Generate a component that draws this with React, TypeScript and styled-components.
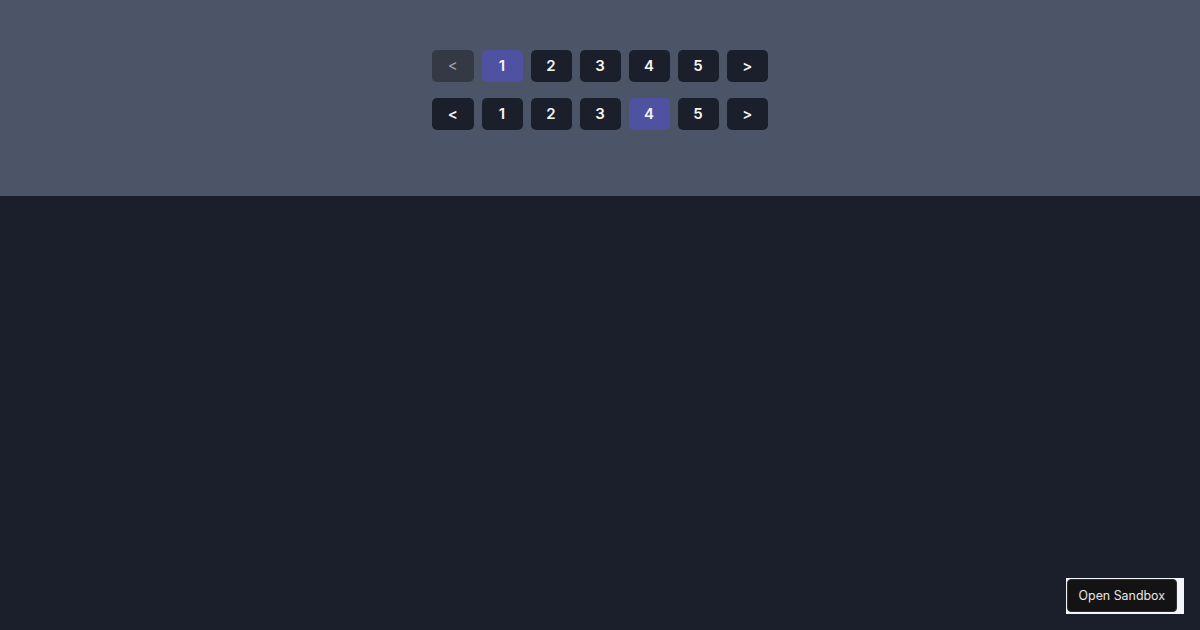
import styled, { createGlobalStyle, css } from "styled-components";

const GlobalStyle = createGlobalStyle`
  html, body {
    margin: 0;
    padding: 0;
    background: #1b1f2b;
    font-family: Inter, "Liberation Sans", sans-serif;
  }
`;

const Page = styled.div`
  min-height: 630px;
  display: flex;
  flex-direction: column;
  background: #1b1f2b;
`;

const Header = styled.section`
  background: #4b5567;
  height: 196px;
  box-sizing: border-box;
  padding-top: 50px;
  display: flex;
  flex-direction: column;
  align-items: center;
  gap: 16px;
`;

const Pager = styled.nav`
  display: flex;
  gap: 8px;
`;

const PageButton = styled.button<{ $active?: boolean; $arrow?: boolean }>`
  height: 32px;
  width: ${(p) => (p.$arrow ? "41.5px" : "41px")};
  padding: 0 0 2px;
  border: 0;
  border-radius: 5px;
  background: #1b1f2b;
  color: #f3f4f6;
  font-family: Inter, "Liberation Sans", sans-serif;
  font-size: 15px;
  font-weight: 600;
  text-align: center;
  cursor: pointer;

  ${(p) =>
    p.$active &&
    css`
      background: #4f52a0;
    `}

  &:disabled {
    background: #343945;
    color: #9ca3af;
    font-weight: 400;
    cursor: default;
  }
`;

const SandboxWrap = styled.div`
  position: fixed;
  right: 16px;
  bottom: 16px;
  background: #f5f6fa;
  padding: 1px 7px 2px 1px;
`;

const SandboxButton = styled.button`
  height: 33px;
  padding: 0 11px 1px;
  background: #131313;
  color: #e8e8e8;
  border: 1px solid #2c2f36;
  border-radius: 4px;
  font-family: Inter, "Liberation Sans", sans-serif;
  font-size: 12.4px;
  display: block;
`;

const Pagination = ({ current }: { current: number }) => (
  <Pager>
    <PageButton $arrow disabled={current === 1}>
      &lt;
    </PageButton>
    {[1, 2, 3, 4, 5].map((n) => (
      <PageButton key={n} $active={n === current}>
        {n}
      </PageButton>
    ))}
    <PageButton $arrow disabled={current === 5}>
      &gt;
    </PageButton>
  </Pager>
);

const App = () => (
  <Page>
    <GlobalStyle />
    <Header>
      <Pagination current={1} />
      <Pagination current={4} />
    </Header>
    <SandboxWrap>
      <SandboxButton>Open Sandbox</SandboxButton>
    </SandboxWrap>
  </Page>
);

export default App;
